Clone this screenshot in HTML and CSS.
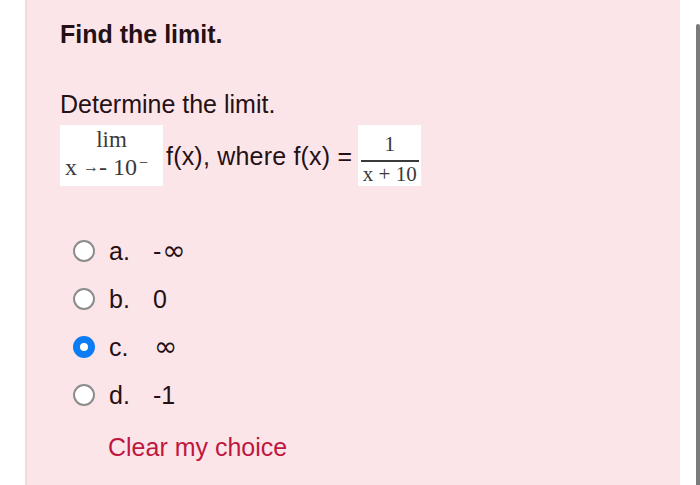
FILE: index.html
```html
<!DOCTYPE html>
<html lang="en">
<head>
<meta charset="utf-8">
<title>Find the limit</title>
<link rel="stylesheet" href="styles.css">
</head>
<body>
<div class="page">
  <main class="panel">
    <h1 class="title">Find the limit.</h1>
    <p class="qtext">Determine the limit.</p>
    <div class="mathrow">
      <span class="mbox limbox">
        <span class="lim">lim</span>
        <span class="sub">x <span class="arr">&rarr;</span>- 10<sup class="sup">&minus;</sup></span>
      </span>
      <span class="mtext">f(x), where f(x) =</span>
      <span class="mbox fracbox">
        <span class="num">1</span>
        <span class="den">x + 10</span>
      </span>
    </div>
    <ul class="options">
      <li class="opt"><span class="radio"></span><span class="letter">a.</span><span class="val">-<span class="inf">∞</span></span></li>
      <li class="opt"><span class="radio"></span><span class="letter">b.</span><span class="val">0</span></li>
      <li class="opt"><span class="radio checked"></span><span class="letter">c.</span><span class="val"><span class="inf">∞</span></span></li>
      <li class="opt"><span class="radio"></span><span class="letter">d.</span><span class="val">-1</span></li>
    </ul>
    <a class="clear">Clear my choice</a>
  </main>
  <div class="scrollbar"></div>
</div>
</body>
</html>
```

FILE: styles.css
```css
html, body {
  margin: 0;
  padding: 0;
  background: #ffffff;
}
body {
  font-family: "Liberation Sans", Arial, sans-serif;
  color: #241015;
}
.page {
  display: flex;
  height: 485px;
  overflow: hidden;
}
.panel {
  margin-left: 25px;
  width: 655px;
  box-sizing: border-box;
  background: #fce5e9;
  border-left: 2px solid #f4dbe0;
  padding: 17px 0 0 33px;
  display: flex;
  flex-direction: column;
  align-items: flex-start;
}
.title {
  margin: 0;
  font-size: 25px;
  font-weight: bold;
  line-height: 34px;
}
.qtext {
  margin: 36px 0 0 0;
  font-size: 25px;
  line-height: 34px;
}
.mathrow {
  margin-top: 4px;
  display: flex;
  align-items: center;
}
.mbox {
  background: #ffffff;
  height: 61px;
  box-sizing: border-box;
  display: flex;
  flex-direction: column;
  align-items: center;
  font-family: "Liberation Serif", "Times New Roman", serif;
  color: #3a3a3a;
}
.limbox {
  width: 103px;
  padding-top: 1px;
}
.lim {
  font-size: 23px;
  line-height: 27px;
}
.sub {
  font-size: 24px;
  line-height: 28px;
  white-space: nowrap;
  padding-right: 10px;
}
.arr {
  font-size: 16px;
  position: relative;
  top: -3px;
}
.sup {
  font-size: 16px;
  vertical-align: 0;
  position: relative;
  top: -7px;
  margin-left: 2px;
}
.mtext {
  margin-left: 3px;
  font-size: 25px;
  letter-spacing: 0.2px;
  line-height: 30px;
  margin-right: 6px;
}
.fracbox {
  width: 63px;
  padding-top: 5px;
}
.num {
  font-size: 22px;
  line-height: 27px;
  width: 58px;
  text-align: center;
  border-bottom: 2px solid #3a3a3a;
  padding-bottom: 3px;
}
.den {
  font-size: 21px;
  line-height: 24px;
}
.options {
  list-style: none;
  margin: 41px 0 0 0;
  padding: 0;
}
.opt {
  height: 48px;
  display: flex;
  align-items: center;
  font-size: 25px;
}
.radio {
  width: 22px;
  height: 22px;
  box-sizing: border-box;
  border-radius: 50%;
  border: 2px solid #8c8c8c;
  background: #ffffff;
  margin-left: 13px;
}
.radio.checked {
  border: 7px solid #0b7cf4;
  background: #ffffff;
}
.letter {
  margin-left: 14px;
  width: 44px;
}
.val {
  white-space: nowrap;
}
.inf {
  font-family: "DejaVu Sans", sans-serif;
  font-size: 28px;
  line-height: 25px;
  margin-left: 1px;
}
.clear {
  margin: 11px 0 0 48px;
  font-size: 25px;
  line-height: 34px;
  color: #c0173f;
}
.scrollbar {
  margin-left: 16px;
  margin-top: 24px;
  width: 4px;
  height: 461px;
  background: #7b7b7b;
  border-radius: 2px 2px 0 0;
}
```
